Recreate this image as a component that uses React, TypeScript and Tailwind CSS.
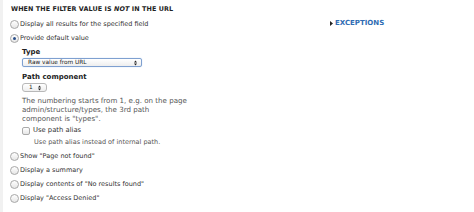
import React from "react";

function Radio({ checked = false }: { checked?: boolean }) {
  return (
    <span className="relative inline-block w-[9px] h-[9px] rounded-full border border-[#a8a8a8] bg-gradient-to-b from-[#ffffff] to-[#e6e6e6] shrink-0">
      {checked && (
        <span className="absolute left-[2px] top-[2px] w-[3px] h-[3px] rounded-full bg-[#2a4f8a]" />
      )}
    </span>
  );
}

function RadioRow({ label, checked }: { label: string; checked?: boolean }) {
  return (
    <div className="flex items-center gap-[1px] h-[14px]">
      <Radio checked={checked} />
      <span className="text-[6.5px] text-[#333] leading-none">{label}</span>
    </div>
  );
}

function Arrows() {
  return (
    <svg width="3" height="6" viewBox="0 0 3 6" className="shrink-0">
      <path d="M0 2.4 L1.5 0.4 L3 2.4 Z" fill="#222" />
      <path d="M0 3.6 L1.5 5.6 L3 3.6 Z" fill="#222" />
    </svg>
  );
}

export default function App() {
  return (
    <div
      className="w-[474px] h-[212px] bg-white flex overflow-hidden border-l-[3px] border-[#f1f1f1]"
      style={{ fontFamily: '"DejaVu Sans", "Liberation Sans", sans-serif' }}
    >
      <div className="w-[325px] pl-[7px] pt-[4px] flex flex-col">
        <div className="text-[6.4px] font-bold text-[#222] tracking-[0.1px] h-[12px] flex items-center pl-[1px]">
          WHEN THE FILTER VALUE IS&nbsp;<i>NOT</i>&nbsp;IN THE URL
        </div>
        <div className="mt-[1px]">
          <RadioRow label="Display all results for the specified field" />
          <RadioRow label="Provide default value" checked />
        </div>
        <div className="pl-[12px] flex flex-col">
          <div className="text-[7px] font-bold text-[#222] mt-[2px] h-[10px] flex items-center">Type</div>
          <div className="w-[120px] h-[9px] mt-[1px] border border-[#7fa0d0] rounded-[2px] bg-gradient-to-b from-[#ffffff] to-[#eeeeee] flex items-center justify-between pl-[5px] pr-[4px] shadow-[0_0_1px_#9cc0ee]">
            <span className="text-[5.8px] text-[#222] leading-none">Raw value from URL</span>
            <Arrows />
          </div>
          <div className="text-[7px] font-bold text-[#222] mt-[5px] h-[10px] flex items-center">Path component</div>
          <div className="w-[25px] h-[9px] border border-[#b8b8b8] rounded-[3px] bg-gradient-to-b from-[#ffffff] to-[#eeeeee] flex items-center justify-between pl-[6px] pr-[5px] mt-[1px]">
            <span className="text-[5.8px] text-[#222] leading-none">1</span>
            <Arrows />
          </div>
          <div className="text-[7.1px] text-[#555] leading-[9px] mt-[4px] whitespace-nowrap">
            The numbering starts from 1, e.g. on the page
            <br />
            admin/structure/types, the 3rd path
            <br />
            component is "types".
          </div>
          <div className="flex items-center gap-[3px] mt-[2px] h-[11px]">
            <span className="inline-block w-[8px] h-[8px] border border-[#aaa] rounded-[2px] bg-gradient-to-b from-[#ffffff] to-[#e6e6e6]" />
            <span className="text-[6.8px] text-[#333] leading-none">Use path alias</span>
          </div>
          <div className="text-[6.5px] text-[#555] pl-[12px] h-[13px] flex items-center">
            Use path alias instead of internal path.
          </div>
        </div>
        <div>
          <RadioRow label={'Show "Page not found"'} />
          <RadioRow label="Display a summary" />
          <RadioRow label={'Display contents of "No results found"'} />
          <RadioRow label={'Display "Access Denied"'} />
        </div>
      </div>
      <div className="pt-[19px] pl-[2px] flex items-start">
        <div className="flex items-center gap-[2px] h-[9px]">
          <svg width="3" height="5" viewBox="0 0 3 5">
            <path d="M0 0 L3 2.5 L0 5 Z" fill="#222" />
          </svg>
          <span className="text-[7px] font-bold text-[#2f6cb3] leading-none">EXCEPTIONS</span>
        </div>
      </div>
    </div>
  );
}
